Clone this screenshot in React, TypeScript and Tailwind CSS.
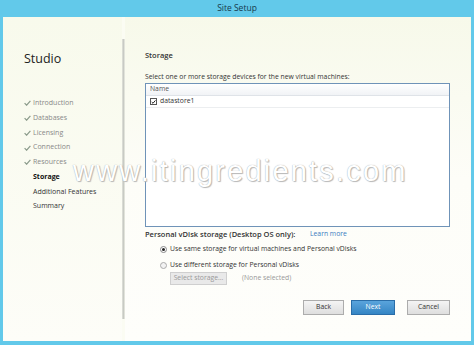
import React from "react";

const Check = () => (
  <svg width="7" height="6" viewBox="0 0 7 6" className="mr-[2px]">
    <path d="M0.6 3.2 L2.6 5.2 L6.4 0.8" fill="none" stroke="#8a9a8a" strokeWidth="1.2" />
  </svg>
);

export default function App() {
  const done = ["Introduction", "Databases", "Licensing", "Connection", "Resources"];
  return (
    <div
      className="relative w-[474px] h-[345px] bg-[#62c9ea] flex flex-col overflow-hidden"
      style={{ fontFamily: '"Open Sans", "Noto Sans", sans-serif' }}
    >
      <div className="h-[17px] flex items-center justify-center text-[8.5px] text-[#163a4c]">Site Setup</div>
      <div className="flex-1 mx-[3px] mb-[4px] flex bg-[#fbfcf3]">
        {/* Left */}
        <div className="w-[119px] flex flex-col pl-[21px] bg-gradient-to-b from-[#f8faec] to-[#fdfdf8]">
          <div className="mt-[34px] h-[16px] flex items-center text-[12.5px] text-[#222]">Studio</div>
          <div className="mt-[29px] flex flex-col text-[7px]">
            {done.map((d) => (
              <div key={d} className="h-[14.75px] flex items-center text-[#888]">
                <Check />
                {d}
              </div>
            ))}
            <div className="h-[14.75px] flex items-center pl-[9px] font-bold text-[#111]">Storage</div>
            <div className="h-[14.75px] flex items-center pl-[9px] text-[#333]">Additional Features</div>
            <div className="h-[14.75px] flex items-center pl-[9px] text-[#333]">Summary</div>
          </div>
        </div>
        {/* divider shadow */}
        <div className="w-[3px] flex flex-col py-[22px]">
          <div className="flex-1 bg-gradient-to-r from-[#e2e4dc] via-[#c8cac4] to-[#eef0e6]" />
        </div>
        {/* Right */}
        <div className="flex-1 flex flex-col pl-[20px] pr-[21px] bg-gradient-to-b from-[#f7f9ea] via-[#fdfdf8] to-[#fefefb] text-[6.8px] text-[#333]">
          <div className="mt-[34px] h-[10px] flex items-center text-[7.5px] font-semibold text-[#333]">Storage</div>
          <div className="mt-[11px] h-[10px] flex items-center">Select one or more storage devices for the new virtual machines:</div>
          <div className="mt-[1px] h-[144px] border border-[#6f93b8] bg-white flex flex-col">
            <div className="h-[12px] flex items-center pl-[4px] text-[#555] bg-gradient-to-b from-[#ffffff] to-[#f1f3f6] border-b border-[#dfe3e8]">
              Name
            </div>
            <div className="h-[12px] flex items-center pl-[4px] border-b border-[#eceef0]">
              <div className="w-[7px] h-[7px] border border-[#555] bg-white flex items-center justify-center mr-[3px]">
                <svg width="7" height="6" viewBox="0 0 7 6">
                  <path d="M1 3 L2.8 4.8 L6.2 0.8" fill="none" stroke="#111" strokeWidth="1.3" />
                </svg>
              </div>
              datastore1
            </div>
          </div>
          <div className="mt-[2px] h-[11px] flex items-center">
            <span className="font-semibold text-[7.5px] text-[#333] w-[165px]">Personal vDisk storage (Desktop OS only):</span>
            <span className="text-[#3a7cc0]">Learn more</span>
          </div>
          <div className="mt-[4px] h-[11px] flex items-center pl-[15px]">
            <div className="w-[7px] h-[7px] rounded-full border border-[#888] bg-white flex items-center justify-center mr-[3px]">
              <div className="w-[3px] h-[3px] rounded-full bg-[#222]" />
            </div>
            Use same storage for virtual machines and Personal vDisks
          </div>
          <div className="mt-[5px] h-[11px] flex items-center pl-[15px]">
            <div className="w-[7px] h-[7px] rounded-full border border-[#aaa] bg-[#f2f2f2] mr-[3px]" />
            Use different storage for Personal vDisks
          </div>
          <div className="mt-[1px] flex items-center pl-[25px]">
            <div className="w-[57px] h-[13px] border border-[#cfcfcf] bg-[#e9e9e9] text-[#999] flex items-center justify-center">
              Select storage...
            </div>
            <span className="ml-[15px] text-[#999]">(None selected)</span>
          </div>
          <div className="mt-[15px] flex items-center justify-end">
            <div className="w-[41px] h-[15px] border border-[#acacac] bg-gradient-to-b from-[#f4f4f4] to-[#dedede] flex items-center justify-center text-[#333]">
              Back
            </div>
            <div className="ml-[7px] w-[44px] h-[15px] border border-[#2a6da8] bg-gradient-to-b from-[#5aa4dc] to-[#3485c4] flex items-center justify-center text-white">
              Next
            </div>
            <div className="ml-[12px] w-[43px] h-[15px] border border-[#acacac] bg-gradient-to-b from-[#f4f4f4] to-[#dedede] flex items-center justify-center text-[#333]">
              Cancel
            </div>
          </div>
        </div>
      </div>
      <div
        className="absolute left-[73px] top-[157px] text-[29px] leading-none text-white pointer-events-none"
        style={{ fontFamily: '"Liberation Sans", Arial, sans-serif', textShadow: "0 0 1px #999, 1px 1px 1px #bbb", letterSpacing: "2.2px" }}
      >
        www.itingredients.com
      </div>
    </div>
  );
}
